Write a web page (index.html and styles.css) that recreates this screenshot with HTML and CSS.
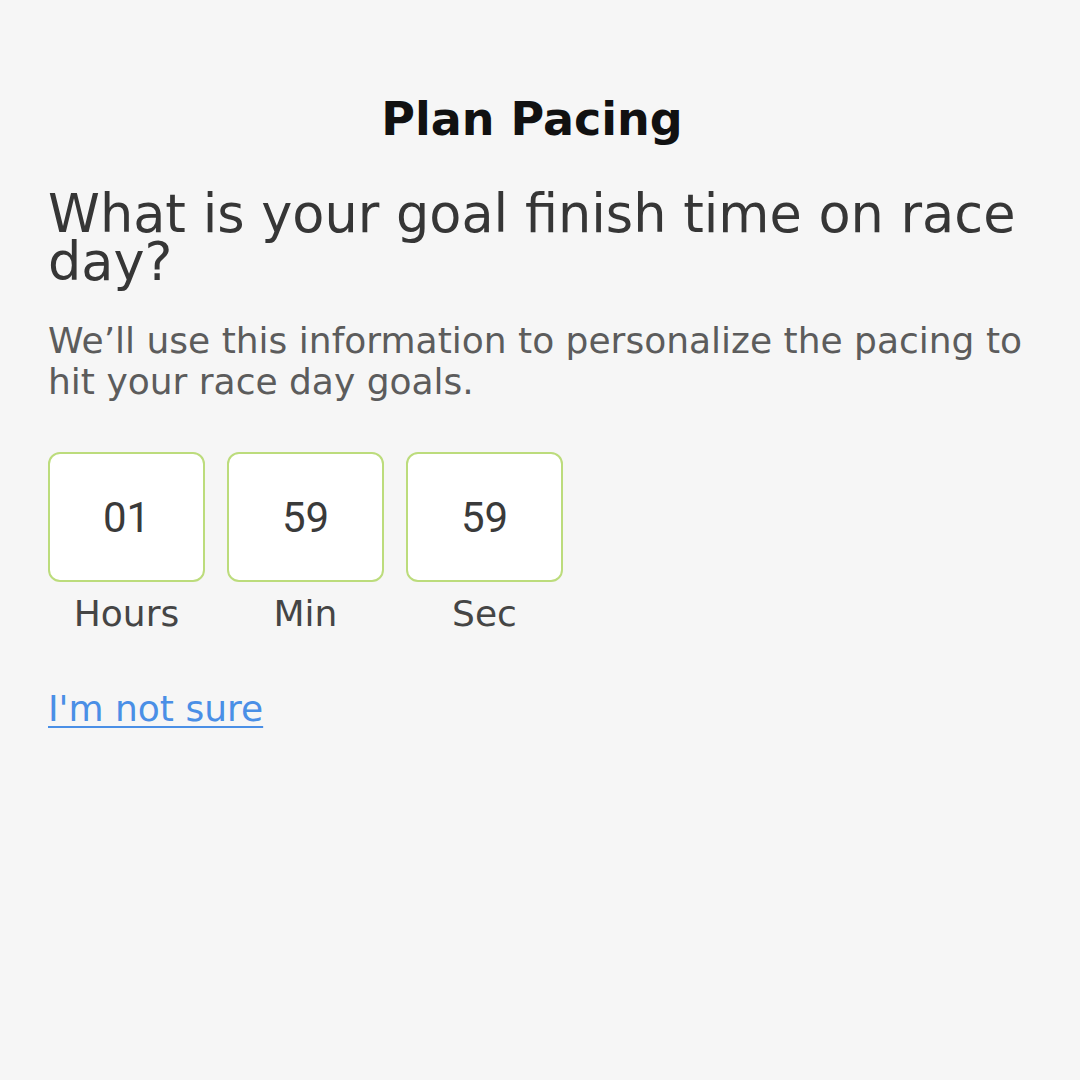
FILE: index.html
```html
<!DOCTYPE html>
<html lang="en">
<head>
    <meta charset="UTF-8">
    <meta name="viewport" content="width=device-width, initial-scale=1.0">
    <title>Plan Pacing</title>
    <link rel="stylesheet" href="styles.css">
</head>
<body>
    <main class="page">
        <h1 class="page-title">Plan Pacing</h1>

        <section class="goal">
            <h2 class="goal-question">What is your goal finish time on race day?</h2>
            <p class="goal-hint">We’ll use this information to personalize the pacing to hit your race day goals.</p>

            <div class="time-fields">
                <div class="time-field">
                    <div class="time-box">01</div>
                    <span class="time-label">Hours</span>
                </div>
                <div class="time-field">
                    <div class="time-box">59</div>
                    <span class="time-label">Min</span>
                </div>
                <div class="time-field">
                    <div class="time-box">59</div>
                    <span class="time-label">Sec</span>
                </div>
            </div>

            <a class="not-sure" href="#">I'm not sure</a>
        </section>
    </main>
</body>
</html>
```

FILE: styles.css
```css
body {
    margin: 0;
    background-color: #f6f6f6;
    font-family: "DejaVu Sans", "Noto Sans", sans-serif;
    color: #333333;
}

.page {
    display: flex;
    flex-direction: column;
    padding: 89px 48px 0 48px;
}

.page-title {
    margin: 0;
    padding-right: 16px;
    text-align: center;
    font-size: 46px;
    font-weight: 700;
    line-height: 60px;
    color: #111111;
}

.goal {
    display: flex;
    flex-direction: column;
    align-items: flex-start;
    margin-top: 41px;
}

.goal-question {
    margin: 0;
    font-size: 52.5px;
    font-weight: 400;
    line-height: 48px;
    color: #363636;
}

.goal-hint {
    margin: 34px 0 0 0;
    font-size: 36px;
    line-height: 41px;
    color: #5c5c5c;
}

.time-fields {
    display: flex;
    gap: 22px;
    margin-top: 50px;
}

.time-field {
    display: flex;
    flex-direction: column;
    align-items: center;
    gap: 12px;
}

.time-box {
    box-sizing: border-box;
    width: 157px;
    height: 130px;
    display: flex;
    align-items: center;
    justify-content: center;
    background-color: #ffffff;
    border: 2px solid #bcdc7c;
    border-radius: 12px;
    font-family: Roboto, "Noto Sans", sans-serif;
    font-size: 42px;
    color: #3a3a3a;
}

.time-label {
    font-size: 36px;
    line-height: 40px;
    color: #454545;
}

.not-sure {
    margin-top: 55px;
    font-size: 36px;
    line-height: 40px;
    color: #4a8fe6;
    text-decoration: underline;
    text-decoration-thickness: 2px;
    text-underline-offset: 5px;
}
```
